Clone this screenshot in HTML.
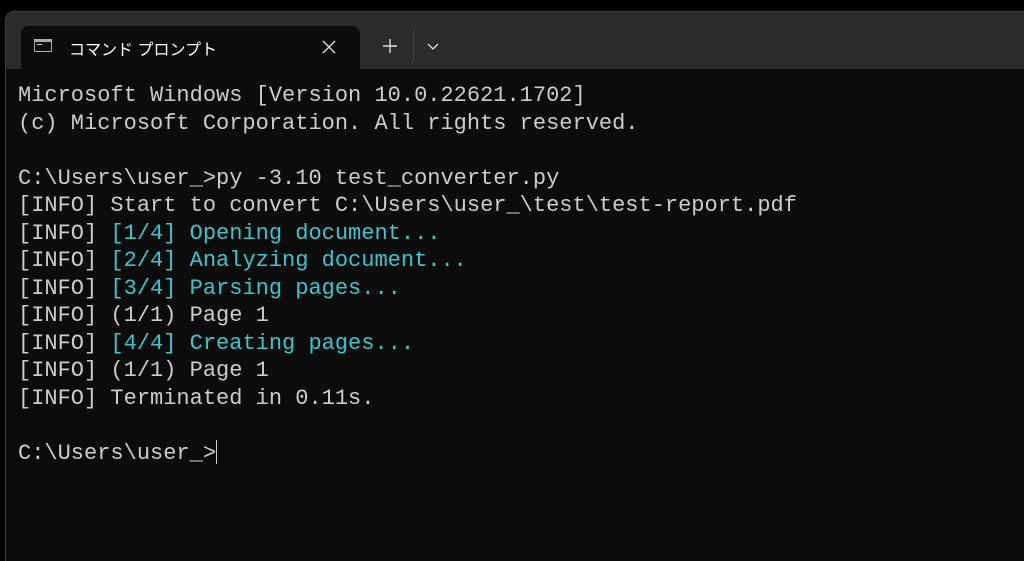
<!DOCTYPE html>
<html><head><meta charset="utf-8"><style>
html,body{margin:0;padding:0;width:1024px;height:561px;overflow:hidden;background:#000;}
.win{position:absolute;left:5px;top:11px;width:1018px;height:549px;background:#2b2b2b;border-radius:9px 0 0 0;border-left:1px solid #3a3a3a;border-top:1px solid #3a3a3a;}
.tab{position:absolute;left:21px;top:26px;width:339px;height:44px;background:#0c0c0c;border-radius:8px 8px 0 0;}
.body{position:absolute;left:6px;top:69px;width:1018px;height:492px;background:#0c0c0c;}
.title{position:absolute;left:69px;top:36px;font:16px "Liberation Sans","Noto Sans CJK JP",sans-serif;color:#fff;}
.ico{position:absolute;left:34px;top:39px;width:18px;height:13px;background:#111;border:1px solid #aaa;border-top:3px solid #aaa;box-sizing:border-box;}
.ico:after{content:"";position:absolute;left:2px;top:2px;width:5px;height:1px;background:#ccc;}
pre{position:absolute;left:18px;top:82px;margin:0;font:22px/27.5px "Liberation Mono",monospace;color:#cccccc;}
.c{color:#3ac5cc;}
.cur{display:inline-block;width:1px;height:24px;background:#ccc;vertical-align:-5px;}
.sep{position:absolute;left:413px;top:31px;width:1px;height:31px;background:#444;}
</style></head><body>
<div class="win"></div>
<div class="tab"></div>
<div class="body"></div>
<div class="ico"></div>
<div class="title">コマンド プロンプト</div>
<svg style="position:absolute;left:322px;top:40px" width="14" height="14"><path d="M1 1L13 13M13 1L1 13" stroke="#ddd" stroke-width="1.4"/></svg>
<svg style="position:absolute;left:382px;top:38px" width="16" height="16"><path d="M8 1V15M1 8H15" stroke="#ddd" stroke-width="1.4"/></svg>
<div class="sep"></div>
<svg style="position:absolute;left:427px;top:43px" width="12" height="8"><path d="M1 1L6 6L11 1" stroke="#ddd" stroke-width="1.3" fill="none"/></svg>
<pre>Microsoft Windows [Version 10.0.22621.1702]
(c) Microsoft Corporation. All rights reserved.

C:\Users\user_&gt;py -3.10 test_converter.py
[INFO] Start to convert C:\Users\user_\test\test-report.pdf
[INFO] <span class="c">[1/4] Opening document...</span>
[INFO] <span class="c">[2/4] Analyzing document...</span>
[INFO] <span class="c">[3/4] Parsing pages...</span>
[INFO] (1/1) Page 1
[INFO] <span class="c">[4/4] Creating pages...</span>
[INFO] (1/1) Page 1
[INFO] Terminated in 0.11s.

C:\Users\user_&gt;<span class="cur"></span></pre>
</body></html>
